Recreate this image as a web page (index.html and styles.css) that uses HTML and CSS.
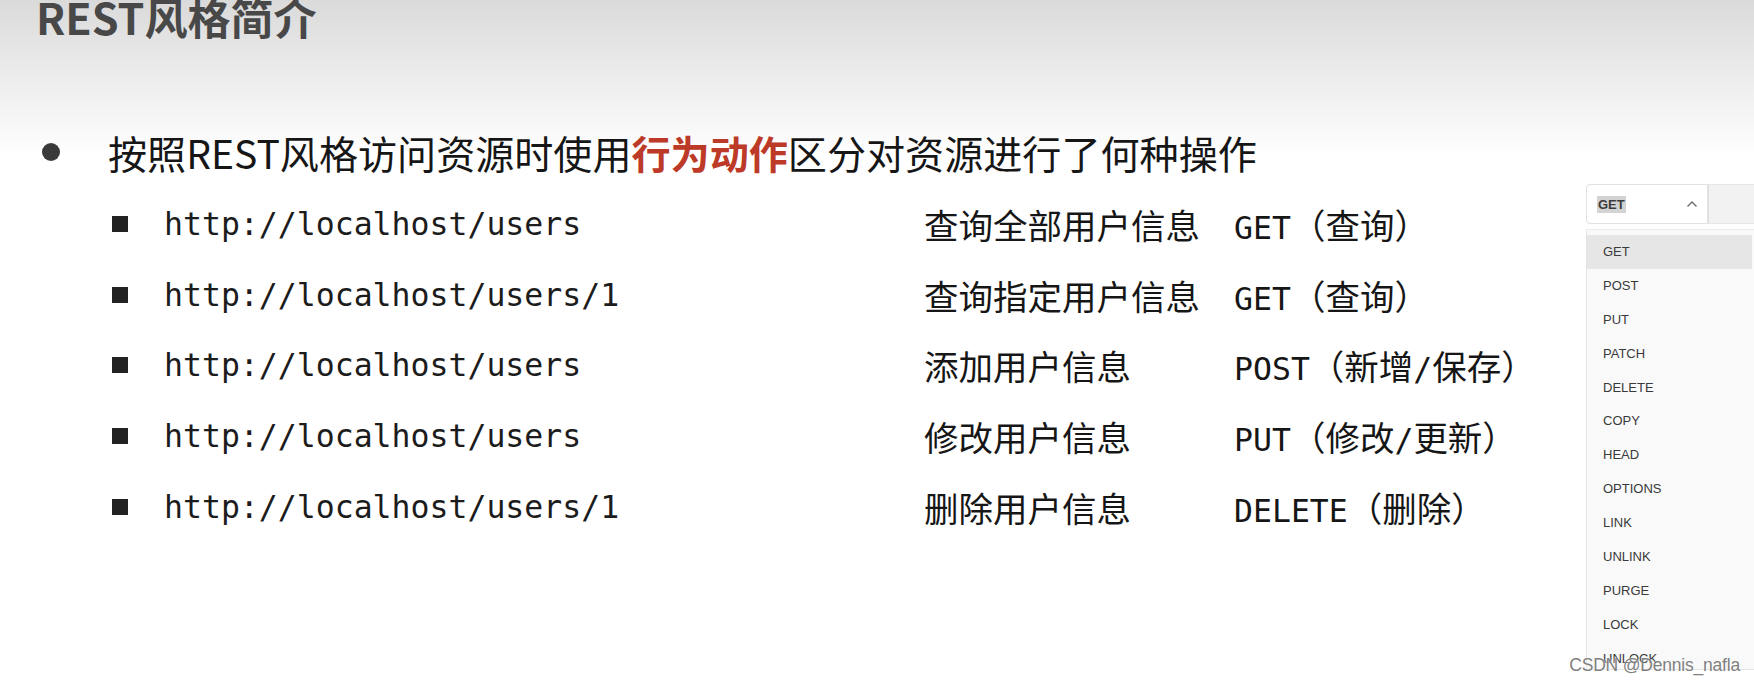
FILE: index.html
```html
<!DOCTYPE html>
<html lang="zh-CN">
<head>
<meta charset="utf-8">
<title>REST风格简介</title>
<link rel="stylesheet" href="styles.css">
</head>
<body>
<div class="slide">
  <h1 class="title">REST风格简介</h1>
  <div class="lead">
    <span class="dot"></span>
    <p class="lead-text">按照REST风格访问资源时使用<strong class="em">行为动作</strong>区分对资源进行了何种操作</p>
  </div>
  <ul class="rows">
    <li class="row"><span class="sq"></span><span class="url">http://localhost/users</span><span class="desc">查询全部用户信息</span><span class="method"><span class="mono">GET</span>（查询）</span></li>
    <li class="row"><span class="sq"></span><span class="url">http://localhost/users/1</span><span class="desc">查询指定用户信息</span><span class="method"><span class="mono">GET</span>（查询）</span></li>
    <li class="row"><span class="sq"></span><span class="url">http://localhost/users</span><span class="desc">添加用户信息</span><span class="method"><span class="mono">POST</span>（新增<span class="mono">/</span>保存）</span></li>
    <li class="row"><span class="sq"></span><span class="url">http://localhost/users</span><span class="desc">修改用户信息</span><span class="method"><span class="mono">PUT</span>（修改<span class="mono">/</span>更新）</span></li>
    <li class="row"><span class="sq"></span><span class="url">http://localhost/users/1</span><span class="desc">删除用户信息</span><span class="method"><span class="mono">DELETE</span>（删除）</span></li>
  </ul>
</div>

<div class="picker">
  <div class="select-row">
    <div class="select">
      <span class="sel-text">GET</span>
      <svg class="caret" width="12" height="8" viewBox="0 0 12 8"><path d="M1.5 6.5 L6 2 L10.5 6.5" fill="none" stroke="#6b6b6b" stroke-width="1.4"/></svg>
    </div>
    <div class="select-rest"></div>
  </div>
  <ul class="menu">
    <li class="item active">GET</li>
    <li class="item">POST</li>
    <li class="item">PUT</li>
    <li class="item">PATCH</li>
    <li class="item">DELETE</li>
    <li class="item">COPY</li>
    <li class="item">HEAD</li>
    <li class="item">OPTIONS</li>
    <li class="item">LINK</li>
    <li class="item">UNLINK</li>
    <li class="item">PURGE</li>
    <li class="item">LOCK</li>
    <li class="item">UNLOCK</li>
  </ul>
</div>

<div class="watermark">CSDN @Dennis_nafla</div>
</body>
</html>
```
FILE: styles.css
```css
html, body {
  margin: 0;
  padding: 0;
  width: 1754px;
  height: 683px;
  overflow: hidden;
}
body {
  position: relative;
  background: linear-gradient(to bottom, #dadada 0px, #e6e6e6 50px, #f4f4f4 110px, #fcfcfc 145px, #ffffff 152px) no-repeat;
  background-color: #fff;
  font-family: "Noto Sans CJK SC", "Noto Sans", sans-serif;
  color: #141414;
}
.slide {
  display: flex;
  flex-direction: column;
}
.title {
  margin: -5px 0 0 0;
  padding-left: 36px;
  font-size: 43px;
  line-height: 43px;
  font-weight: 700;
  color: #484848;
}
.lead {
  display: flex;
  align-items: center;
  margin-top: 89px;
  padding-left: 42px;
  height: 50px;
}
.dot {
  width: 18px;
  height: 18px;
  border-radius: 50%;
  background: #3a3a3a;
  flex: none;
}
.lead-text {
  margin: 0 0 0 48px;
  font-size: 39.1px;
  line-height: 50px;
  color: #161616;
  white-space: nowrap;
}
.em {
  color: #bc3a27;
  font-weight: 700;
}
.rows {
  list-style: none;
  margin: 11.6px 0 0 0;
  padding: 0 0 0 112px;
}
.row {
  display: grid;
  grid-template-columns: 52px 760px 310px auto;
  align-items: center;
  height: 70.75px;
}
.sq {
  width: 16px;
  height: 16px;
  background: #222;
}
.url, .mono {
  font-family: "DejaVu Sans Mono", "Liberation Mono", monospace;
  font-size: 31.5px;
}
.url {
  color: #1c1c1c;
  white-space: nowrap;
}
.desc {
  font-size: 34.5px;
  white-space: nowrap;
  color: #161616;
}
.method {
  font-size: 34.5px;
  white-space: nowrap;
  color: #161616;
}

/* request method picker */
.picker {
  position: absolute;
  left: 1586px;
  top: 184px;
  width: 168px;
  font-family: "Liberation Sans", Arial, sans-serif;
}
.select-row {
  display: flex;
  height: 40px;
}
.select {
  width: 122px;
  display: flex;
  align-items: center;
  justify-content: space-between;
  padding: 0 9px 0 10px;
  box-sizing: border-box;
  background: #fff;
  border: 1px solid #e2e2e2;
  border-radius: 4px 0 0 4px;
}
.sel-text {
  font-size: 13px;
  font-weight: 700;
  color: #3c3c3c;
  background: #d3d3d3;
  padding: 1px 1px;
}
.caret {
  display: block;
}
.select-rest {
  flex: 1;
  background: #f2f2f2;
  border-top: 1px solid #e6e6e6;
  border-bottom: 1px solid #e6e6e6;
  border-left: 1px solid #e0e0e0;
}
.menu {
  list-style: none;
  margin: 5px 0 0 0;
  padding: 5px 2px 0 0;
  height: 441px;
  box-sizing: border-box;
  overflow: hidden;
  background: #f9f9f9;
  border-left: 1px solid #e4e4e4;
  border-top: 1px solid #ececec;
  border-bottom: 1px solid #e4e4e4;
}
.item {
  height: 33.9px;
  line-height: 33.9px;
  padding-left: 16px;
  font-size: 13px;
  color: #3a3a3a;
}
.item.active {
  background: #e6e6e6;
}
.watermark {
  position: absolute;
  right: 14px;
  bottom: 7px;
  font-family: "Liberation Sans", Arial, sans-serif;
  font-size: 17.5px;
  letter-spacing: -0.2px;
  line-height: 22px;
  color: #808080;
  text-shadow: 0 0 2px #fff;
}
```
